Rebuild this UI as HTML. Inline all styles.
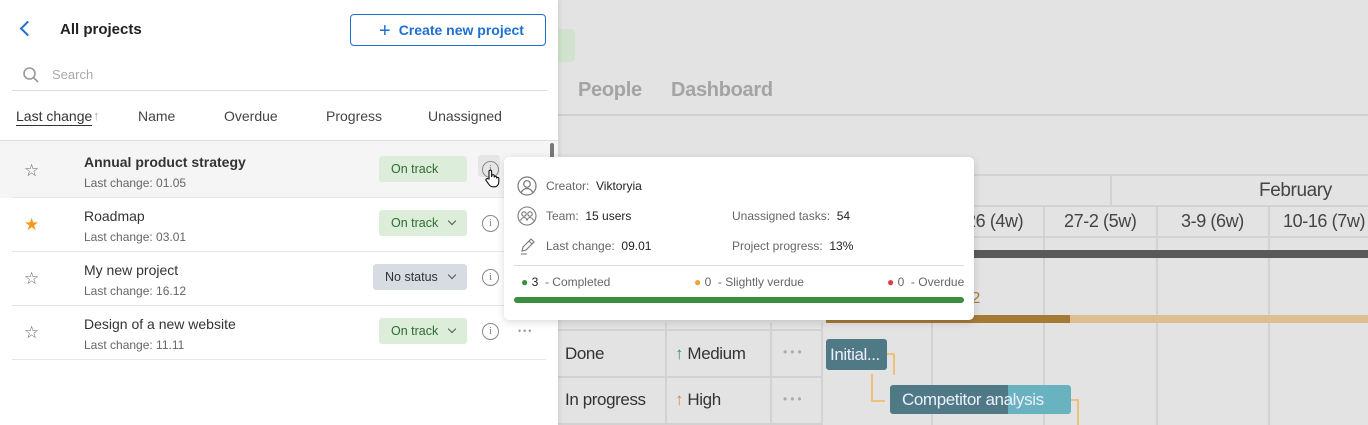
<!DOCTYPE html>
<html><head><meta charset="utf-8"><style>
*{margin:0;padding:0;box-sizing:border-box}
body{width:1368px;height:425px;overflow:hidden;background:#e3e3e3;font-family:"Liberation Sans",sans-serif;position:relative;color:#222}
.a{position:absolute;white-space:nowrap}
.vl{position:absolute;width:2px;background:#d2d2d2}
.hl{position:absolute;height:2px;background:#d2d2d2}
.gt{position:absolute;font-size:18px;color:#444;white-space:nowrap;letter-spacing:-0.4px}
.panel{position:absolute;left:0;top:0;width:558px;height:425px;background:#fff;box-shadow:2px 0 4px rgba(0,0,0,.08)}
.row{position:absolute;left:12px;width:534px;height:54px;border-bottom:1px solid #e6e6e6}
.row .t{position:absolute;left:72px;top:10px;font-size:14px;color:#333}
.row .s{position:absolute;left:72px;top:32px;font-size:12px;color:#666}
.row .star{position:absolute;left:12px;top:17px;font-size:17px;color:#666}
.pill{position:absolute;top:12px;height:26px;border-radius:3px;background:#dcedd9;color:#2f6b32;font-size:12.5px;line-height:26px;padding-left:12px}
.info{position:absolute;left:470px;top:17px;width:17px;height:17px;border:1.3px solid #888;border-radius:50%;font-size:11px;color:#888;text-align:center;line-height:15px;font-family:"Liberation Serif",serif}
.chev{position:absolute;right:12px;top:8px;width:6px;height:6px;border-right:1.2px solid #555;border-bottom:1.2px solid #555;transform:rotate(45deg)}
.tip{position:absolute;left:504px;top:157px;width:470px;height:163px;background:#fff;border-radius:5px;box-shadow:0 2px 8px rgba(0,0,0,.15)}
.tip .l{position:absolute;font-size:12px;color:#666;white-space:nowrap}
.tip .l b{font-weight:normal;color:#222}
</style></head><body>
<div class="a" style="left:550px;top:29px;width:25px;height:33px;background:#d1e3cf;border-radius:4px"></div>
<div class="a" style="left:578px;top:79px;font-size:20px;color:#a4a4a4;font-weight:bold;letter-spacing:-0.3px">People</div>
<div class="a" style="left:671px;top:79px;font-size:20px;color:#a4a4a4;font-weight:bold;letter-spacing:-0.3px">Dashboard</div>
<div class="hl" style="left:558px;top:114px;width:810px;background:#cfcfcf"></div>
<div class="hl" style="left:822px;top:174px;width:546px"></div>
<div class="hl" style="left:822px;top:205px;width:546px"></div>
<div class="hl" style="left:822px;top:236px;width:546px"></div>
<div class="vl" style="left:1110px;top:174px;height:32px"></div>
<div class="gt" style="left:1259px;top:180px;font-size:19px">February</div>
<div class="vl" style="left:931px;top:205px;height:220px"></div>
<div class="vl" style="left:1043px;top:205px;height:220px"></div>
<div class="vl" style="left:1156px;top:205px;height:220px"></div>
<div class="vl" style="left:1268px;top:205px;height:220px"></div>
<div class="gt" style="left:966px;top:211px">26 (4w)</div>
<div class="gt" style="left:1064px;top:211px">27-2 (5w)</div>
<div class="gt" style="left:1181px;top:211px">3-9 (6w)</div>
<div class="gt" style="left:1283px;top:211px">10-16 (7w)</div>
<div class="a" style="left:822px;top:250px;width:546px;height:8px;background:#595959"></div>
<div class="a" style="left:958px;top:290px;font-size:16px;color:#a57a35">.02</div>
<div class="a" style="left:826px;top:315px;width:244px;height:8px;background:#a57a35"></div>
<div class="a" style="left:1070px;top:315px;width:298px;height:8px;background:#dcbe90"></div>
<div class="hl" style="left:558px;top:329px;width:264px"></div>
<div class="hl" style="left:558px;top:376px;width:264px"></div>
<div class="hl" style="left:558px;top:423px;width:264px"></div>
<div class="vl" style="left:665px;top:323px;height:102px"></div>
<div class="vl" style="left:770px;top:323px;height:102px"></div>
<div class="vl" style="left:821px;top:323px;height:102px"></div>
<div class="gt" style="left:565px;top:344px;font-size:17px;color:#333">Done</div>
<div class="gt" style="left:675px;top:344px;font-size:17px;color:#333"><span style="color:#2e9a4a">↑</span> Medium</div>
<div class="gt" style="left:783px;top:345px;font-size:12px;color:#aaa;letter-spacing:3px">•••</div>
<div class="gt" style="left:565px;top:390px;font-size:17px;color:#333">In progress</div>
<div class="gt" style="left:675px;top:390px;font-size:17px;color:#333"><span style="color:#d58a3b">↑</span> High</div>
<div class="gt" style="left:783px;top:392px;font-size:12px;color:#aaa;letter-spacing:3px">•••</div>
<div class="a" style="left:887px;top:353px;width:8px;height:22px;border-top:2px solid #ecc27a;border-right:2px solid #ecc27a"></div>
<div class="a" style="left:871px;top:374px;width:2px;height:28px;background:#ecc27a"></div>
<div class="a" style="left:871px;top:400px;width:14px;height:2px;background:#ecc27a"></div>
<div class="a" style="left:1071px;top:399px;width:8px;height:26px;border-top:2px solid #ecc27a;border-right:2px solid #ecc27a"></div>
<div class="a" style="left:826px;top:339px;width:61px;height:31px;background:#4f7a85;border-radius:3px;color:#eef;font-size:17px;line-height:31px;padding-left:4px;letter-spacing:-0.4px">Initial...</div>
<div class="a" style="left:890px;top:385px;width:181px;height:29px;background:linear-gradient(90deg,#4f7a85 0 118px,#68b3bf 118px);border-radius:3px;color:#eef;font-size:17px;line-height:29px;padding-left:12px;letter-spacing:-0.4px">Competitor analysis</div>

<div class="panel">
<div class="a" style="left:22px;top:23px;width:11px;height:11px;border-left:2px solid #1e6fd0;border-bottom:2px solid #1e6fd0;transform:rotate(45deg)"></div>
<div class="a" style="left:60px;top:21px;font-size:15px;font-weight:bold;color:#222">All projects</div>
<div class="a" style="left:350px;top:14px;width:196px;height:32px;border:1px solid #1e6fd0;border-radius:4px;color:#1e6fd0;font-size:14px;font-weight:bold;line-height:30px;padding-left:28px"><span style="font-size:20px;font-weight:normal;vertical-align:-2px;margin-right:8px">+</span>Create new project</div>
<svg class="a" style="left:22px;top:66px" width="18" height="18" viewBox="0 0 18 18"><circle cx="7.5" cy="7.5" r="5.5" fill="none" stroke="#999" stroke-width="1.6"/><path d="M11.5 11.5L16 16" stroke="#999" stroke-width="1.6"/></svg>
<div class="a" style="left:52px;top:67px;font-size:13px;color:#aaa">Search</div>
<div class="a" style="left:12px;top:90px;width:535px;height:1px;background:#ddd"></div>
<div class="a" style="left:16px;top:108px;font-size:14px;color:#333;border-bottom:1.5px solid #333;padding-bottom:1px">Last change</div>
<div class="a" style="left:93px;top:108px;font-size:13px;color:#aaa">↑</div>
<div class="a" style="left:138px;top:108px;font-size:14px;color:#444">Name</div>
<div class="a" style="left:224px;top:108px;font-size:14px;color:#444">Overdue</div>
<div class="a" style="left:326px;top:108px;font-size:14px;color:#444">Progress</div>
<div class="a" style="left:428px;top:108px;font-size:14px;color:#444">Unassigned</div>
<div class="a" style="left:0;top:140px;width:558px;height:1px;background:#ddd"></div>
<div class="a" style="left:0;top:141px;width:558px;height:57px;background:#f5f5f5"></div>
<div class="a" style="left:550px;top:143px;width:4px;height:20px;background:#777;border-radius:2px"></div>

<div class="row" style="top:144px">
<div class="star">☆</div><div class="t" style="font-weight:bold">Annual product strategy</div><div class="s">Last change: 01.05</div>
<div class="pill" style="left:367px;width:88px">On track</div>
<div class="a" style="left:466px;top:11px;width:22px;height:22px;background:#e6e6e6;border-radius:3px"></div>
<div class="info">i</div>
<svg class="a" style="left:472px;top:24px" width="16" height="20" viewBox="0 0 16 20"><path d="M5 11V3.5a1.3 1.3 0 0 1 2.6 0V9l.2-1.3a1.2 1.2 0 0 1 2.4.3V9.5a1.2 1.2 0 0 1 2.4 0v1a1.1 1.1 0 0 1 2.2 0V14c0 2.8-1.8 4.8-4.6 4.8H9c-2 0-3-.8-4-2.3L2 12.3a1.2 1.2 0 0 1 1.9-1.4z" fill="#fff" stroke="#111" stroke-width="1.1"/></svg>
</div>
<div class="row" style="top:198px"><div class="star" style="color:#f39a1e">★</div><div class="t">Roadmap</div><div class="s">Last change: 03.01</div>
<div class="pill" style="left:367px;width:88px">On track<span class="chev"></span></div><div class="info">i</div></div>
<div class="row" style="top:252px"><div class="star">☆</div><div class="t">My new project</div><div class="s">Last change: 16.12</div>
<div class="pill" style="left:361px;width:94px;background:#d7dbe2;color:#333">No status<span class="chev"></span></div><div class="info">i</div></div>
<div class="row" style="top:306px"><div class="star">☆</div><div class="t">Design of a new website</div><div class="s">Last change: 11.11</div>
<div class="pill" style="left:367px;width:88px">On track<span class="chev"></span></div><div class="info">i</div>
<div class="a" style="left:506px;top:20px;font-size:9px;color:#999;letter-spacing:2px">•••</div></div>
</div>

<div class="tip">
<svg class="a" style="left:13px;top:19px" width="20" height="20" viewBox="0 0 20 20" fill="none" stroke="#777" stroke-width="1.2"><circle cx="10" cy="10" r="9"/><circle cx="10" cy="8" r="3.3"/><path d="M4.2 16.5c1.5-3 3.5-4 5.8-4s4.3 1 5.8 4"/></svg>
<div class="l" style="left:42px;top:22px">Creator:&nbsp; <b>Viktoryia</b></div>
<svg class="a" style="left:13px;top:49px" width="20" height="20" viewBox="0 0 20 20" fill="none" stroke="#777" stroke-width="1.1"><circle cx="10" cy="10" r="9"/><circle cx="7" cy="8" r="2.2"/><circle cx="13" cy="8" r="2.2"/><path d="M3.5 14.5c1-2 2-3 3.5-3s2.5 1 3 3M10 14.5c.5-2 1.5-3 3-3s2.5 1 3.5 3"/></svg>
<div class="l" style="left:42px;top:52px">Team:&nbsp; <b>15 users</b></div>
<div class="l" style="left:228px;top:52px">Unassigned tasks:&nbsp; <b>54</b></div>
<svg class="a" style="left:15px;top:80px" width="18" height="18" viewBox="0 0 18 18" fill="none" stroke="#777" stroke-width="1.1"><path d="M3 14l1-4 8-8 3 3-8 8z M10 4l3 3 M2 17h6"/></svg>
<div class="l" style="left:42px;top:82px">Last change:&nbsp; <b>09.01</b></div>
<div class="l" style="left:228px;top:82px">Project progress:&nbsp; <b>13%</b></div>
<div class="a" style="left:10px;top:108px;width:450px;height:1px;background:#ddd"></div>
<div class="l" style="left:17px;top:118px"><span style="color:#3a8f3f">●</span> <b>3</b>&nbsp; - Completed</div>
<div class="l" style="left:190px;top:118px"><span style="color:#f2a23a">●</span> 0&nbsp; - Slightly verdue</div>
<div class="l" style="left:383px;top:118px"><span style="color:#e04040">●</span> 0&nbsp; - Overdue</div>
<div class="a" style="left:10px;top:140px;width:450px;height:6px;background:#3a8f3f;border-radius:3px"></div>
</div>
</body></html>
